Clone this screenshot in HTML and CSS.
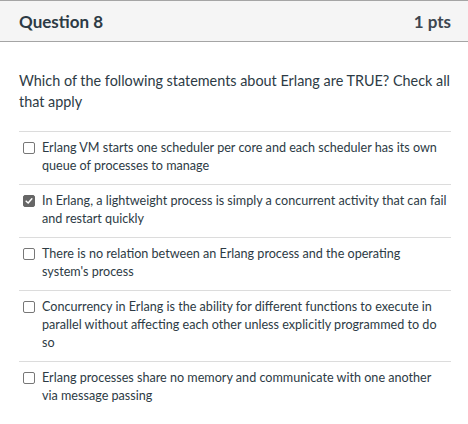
FILE: index.html
```html
<!DOCTYPE html>
<html>
<head>
<meta charset="utf-8">
<link rel="stylesheet" href="styles.css">
</head>
<body>
<div class="quiz">
  <div class="header">
    <span class="title">Question 8</span>
    <span class="points">1 pts</span>
  </div>
  <div class="content">
    <p class="question">Which of the following statements about Erlang are TRUE? Check all that apply</p>
    <div class="answers">
      <div class="answer">
        <span class="box"></span>
        <span class="label">Erlang VM starts one scheduler per core and each scheduler has its own queue of processes to manage</span>
      </div>
      <div class="answer">
        <span class="box checked"><svg viewBox="0 0 12 12" width="12" height="12"><path d="M2.6 6.2 L5 8.5 L9.4 3.4" fill="none" stroke="#fff" stroke-width="1.8" stroke-linecap="round" stroke-linejoin="round"/></svg></span>
        <span class="label">In Erlang, a lightweight process is simply a concurrent activity that can fail and restart quickly</span>
      </div>
      <div class="answer">
        <span class="box"></span>
        <span class="label">There is no relation between an Erlang process and the operating system's process</span>
      </div>
      <div class="answer">
        <span class="box"></span>
        <span class="label">Concurrency in Erlang is the ability for different functions to execute in parallel without affecting each other unless explicitly programmed to do so</span>
      </div>
      <div class="answer">
        <span class="box"></span>
        <span class="label">Erlang processes share no memory and communicate with one another via message passing</span>
      </div>
    </div>
  </div>
</div>
</body>
</html>
```
FILE: styles.css
```css
html, body {
  margin: 0;
  padding: 0;
  background: #fff;
}
body {
  font-family: Lato, "Open Sans", sans-serif;
  color: #2d3b45;
}
.header {
  display: flex;
  justify-content: space-between;
  align-items: center;
  height: 40px;
  padding: 0 17px 0 19px;
  background: #f5f5f5;
  border-top: 1px solid #a5a5a5;
  border-bottom: 1px solid #a5a5a5;
}
.title, .points {
  font-size: 17px;
  font-weight: 700;
}
.points {
  color: #3d4650;
}
.content {
  padding: 0 17px 0 19px;
}
.question {
  margin: 28px 0 0;
  font-size: 14.4px;
  line-height: 21px;
}
.answers {
  margin-top: 19px;
}
.answer {
  display: flex;
  align-items: flex-start;
  gap: 7px;
  padding: 7px 4px 9px 4px;
  border-top: 1px solid #dcdcdc;
  font-size: 12.6px;
  line-height: 18px;
}
.box {
  flex: none;
  box-sizing: border-box;
  width: 12px;
  height: 12px;
  margin-top: 3px;
  border: 1px solid #777;
  border-radius: 2px;
  background: #fff;
  display: flex;
  align-items: center;
  justify-content: center;
}
.box.checked {
  background: #666;
  border-color: #666;
}
.box svg {
  display: block;
}
```
